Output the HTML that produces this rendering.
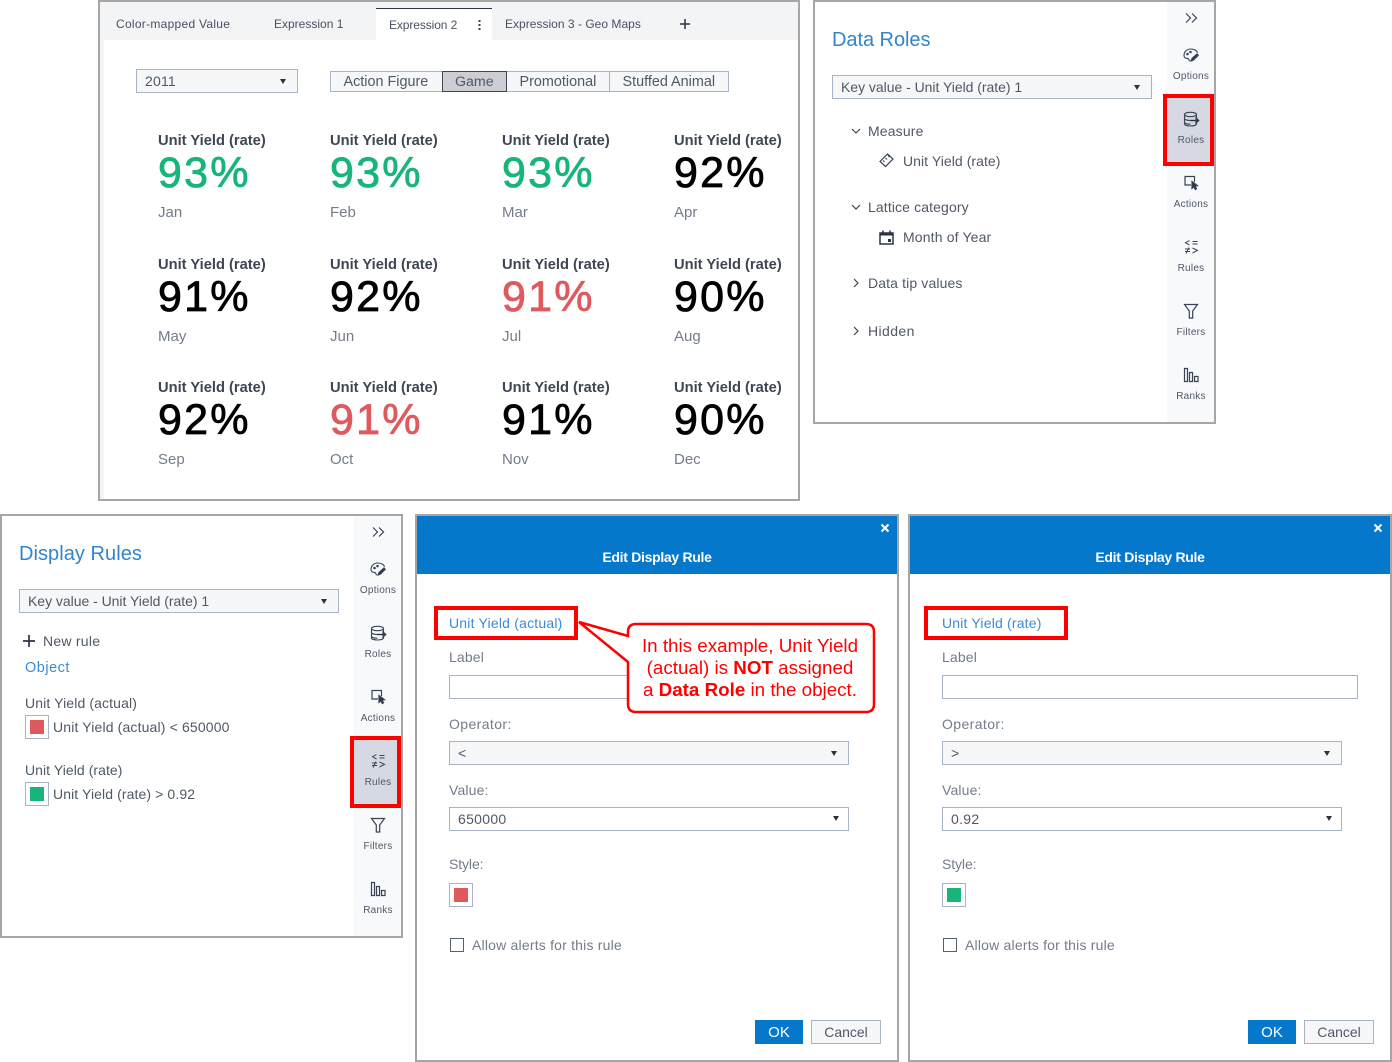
<!DOCTYPE html>
<html><head><meta charset="utf-8"><title>Display Rules</title>
<style>
html,body{margin:0;padding:0;background:#fff}
body{position:relative;width:1392px;height:1062px;overflow:hidden;font-family:"Liberation Sans",sans-serif;font-size:14px;color:#505866}
.b,.t,svg.i{position:absolute;box-sizing:border-box}
.t{white-space:nowrap;line-height:20px;height:20px}
.p{border:2px solid #a6a6a6;background:#fff}
.sel{border:1px solid #a9b3c6;background:#f5f7f9}
.w{background:#fff}
.tab{font-size:12px;color:#4a5060}
.kh{font-size:14.7px;font-weight:bold;color:#3f4653}
.kn{font-size:43px;line-height:50px;height:50px;letter-spacing:2.2px;color:#000;-webkit-text-stroke:.8px currentColor}
.kl{font-size:15px;color:#747c8a}
.g{color:#17b57a}.r{color:#de5a5e}
.sl{font-size:10px;color:#4f5767;text-align:center;width:47px;letter-spacing:.25px;line-height:14px;height:14px}
.blue{color:#3a8cd6}
.lbl{color:#747c89}
.h1{font-size:20px;color:#3085cd;line-height:26px;height:26px}
.hl{border:4px solid #f00;background:#d6d9e1}
.tri{position:absolute;width:0;height:0;border-left:3.5px solid transparent;border-right:3.5px solid transparent;border-top:5px solid #2b3240}
.hd{background:#0578cc}
.ht{color:#fff;font-weight:bold;font-size:14px;text-align:center;letter-spacing:-.3px}
.rb{border:4px solid #f00;background:#fff}
svg.i{overflow:visible;fill:none;stroke:#3a4254;stroke-width:1.2}
</style></head><body>

<svg width="0" height="0" style="position:absolute">
<defs>
<symbol id="opt" viewBox="0 0 24 24" overflow="visible"><path d="M14.500 16.800c-1 .9-2.200 1.200-3.300 1.200-1 0-1.200-.7-1.400-1.400-.2-1-.9-1.300-2-1.300-1.400 0-2.800-.6-2.800-2.800C5 8.600 8 6 11.800 6c3.600 0 6.200 1.800 6.700 3.700" fill="none" stroke="#3a4254" stroke-width="1.100"/><circle cx="8.500" cy="11" r=".7" fill="#3a4254"/><circle cx="11.500" cy="9" r=".7" fill="#3a4254"/><path d="M13 15.500l5-4.500 1.200 1.300-4.700 4.700-2.200.6z" fill="#2b3240"/></symbol>
<symbol id="db" viewBox="0 0 24 24" overflow="visible"><ellipse cx="11.500" cy="7.500" rx="6" ry="2.200" fill="none" stroke="#3a4254" stroke-width="1.100"/><path d="M5.500 7.500v9.500c0 1.200 2.700 2 6 2s5.500-.8 6-2v-1.500M17.500 7.500v3.500M5.500 11.500c0 1.200 2.700 2 6 2M5.500 15.200c0 1.200 2.700 2 6 2" fill="none" stroke="#3a4254" stroke-width="1.100"/><path d="M11 13.500h6.500" stroke="#2b3240" stroke-width="1.400" fill="none"/><path d="M17 11l2.800 2.500-2.800 2.500z" fill="#2b3240"/></symbol>
<symbol id="act" viewBox="0 0 24 24" overflow="visible"><path d="M12 14H6V5.500H15.500v5.500" fill="none" stroke="#3a4254" stroke-width="1.200"/><path d="M13 10.500l5.500 4.200-2.400.5 1.400 2.600-1.200.7-1.400-2.600-1.900 1.500z" fill="#2b3240"/></symbol>
<symbol id="rul" viewBox="0 0 24 24" overflow="visible"><path d="M10.500 5.500L6.500 7.800l4 2.200M13.500 6.500h5M13.500 9h5M6 14h5M6 16.500h5M10 12.500l-3 6M13.500 13l5 2.400-5 2.600" fill="none" stroke="#3a4254" stroke-width="1"/></symbol>
<symbol id="fil" viewBox="0 0 24 24" overflow="visible"><path d="M5.500 5.500h13l-4.800 6.500v7h-3.400v-7z" fill="none" stroke="#3a4254" stroke-width="1.200"/></symbol>
<symbol id="rnk" viewBox="0 0 24 24" overflow="visible"><path d="M5.500 5.500h3v13h-3zM10.500 9.500h3v9h-3zM15.500 13.500h3.500v5h-3.500z" fill="none" stroke="#3a4254" stroke-width="1.200"/></symbol>
<symbol id="dbl" viewBox="0 0 24 24" overflow="visible"><path d="M7 7.500l4.500 4.500-4.500 4.500M13 7.500l4.500 4.500-4.500 4.500" fill="none" stroke="#3a4254" stroke-width="1.200"/></symbol>
</defs>
</svg>

<!-- PANEL 1 -->
<div class="b p" style="left:98px;top:0;width:702px;height:501px"></div>
<div class="b" style="left:100px;top:2px;width:698px;height:38px;background:#f2f4f6"></div>
<div class="b" style="left:100px;top:40px;width:4px;height:459px;background:#f2f4f6"></div>
<div class="b w" style="left:376px;top:8px;width:116px;height:32px;border-top:1px solid #2b3240"></div>
<div class="t tab" style="left:116px;top:14px;letter-spacing:.28px">Color-mapped Value</div>
<div class="t tab" style="left:274px;top:14px">Expression 1</div>
<div class="t tab" style="left:389px;top:15px;letter-spacing:-.1px">Expression 2</div>
<svg class="i" style="left:476px;top:18px;stroke:none;fill:#3a4254" width="8" height="14"><rect x="2.500" y="2" width="2" height="2"/><rect x="2.500" y="6" width="2" height="2"/><rect x="2.500" y="10" width="2" height="2"/></svg>
<div class="t tab" style="left:505px;top:14px;letter-spacing:.02px">Expression 3 - Geo Maps</div>
<svg class="i" style="left:679px;top:18px;stroke:#2b3240;stroke-width:1.500" width="12" height="12"><path d="M6 1v10M1 6h10"/></svg>

<div class="b sel" style="left:136px;top:69px;width:162px;height:24px"></div>
<div class="t" style="left:145px;top:71px;letter-spacing:.2px">2011</div>
<div class="tri" style="left:280px;top:79px"></div>

<div class="b sel" style="left:330px;top:71px;width:113px;height:21px"></div>
<div class="b" style="left:442px;top:71px;width:65px;height:21px;background:#cdced3;border:1px solid #3d4756"></div>
<div class="b sel" style="left:507px;top:71px;width:103px;height:21px;border-left:0"></div>
<div class="b sel" style="left:609px;top:71px;width:120px;height:21px"></div>
<div class="t" style="left:343.500px;top:72px;font-size:14.400px">Action Figure</div>
<div class="t" style="left:455px;top:72px;font-size:14.200px">Game</div>
<div class="t" style="left:519.500px;top:72px;font-size:14.400px">Promotional</div>
<div class="t" style="left:622.500px;top:72px;font-size:14.400px">Stuffed Animal</div>

<div class="t kh" style="left:158px;top:131px">Unit Yield (rate)</div><div class="t kn g" style="left:158px;top:148px">93%</div><div class="t kl" style="left:158px;top:203px">Jan</div>
<div class="t kh" style="left:330px;top:131px">Unit Yield (rate)</div><div class="t kn g" style="left:330px;top:148px">93%</div><div class="t kl" style="left:330px;top:203px">Feb</div>
<div class="t kh" style="left:502px;top:131px">Unit Yield (rate)</div><div class="t kn g" style="left:502px;top:148px">93%</div><div class="t kl" style="left:502px;top:203px">Mar</div>
<div class="t kh" style="left:674px;top:131px">Unit Yield (rate)</div><div class="t kn" style="left:674px;top:148px">92%</div><div class="t kl" style="left:674px;top:203px">Apr</div>

<div class="t kh" style="left:158px;top:255px">Unit Yield (rate)</div><div class="t kn" style="left:158px;top:272px">91%</div><div class="t kl" style="left:158px;top:327px">May</div>
<div class="t kh" style="left:330px;top:255px">Unit Yield (rate)</div><div class="t kn" style="left:330px;top:272px">92%</div><div class="t kl" style="left:330px;top:327px">Jun</div>
<div class="t kh" style="left:502px;top:255px">Unit Yield (rate)</div><div class="t kn r" style="left:502px;top:272px">91%</div><div class="t kl" style="left:502px;top:327px">Jul</div>
<div class="t kh" style="left:674px;top:255px">Unit Yield (rate)</div><div class="t kn" style="left:674px;top:272px">90%</div><div class="t kl" style="left:674px;top:327px">Aug</div>

<div class="t kh" style="left:158px;top:378px">Unit Yield (rate)</div><div class="t kn" style="left:158px;top:395px">92%</div><div class="t kl" style="left:158px;top:450px">Sep</div>
<div class="t kh" style="left:330px;top:378px">Unit Yield (rate)</div><div class="t kn r" style="left:330px;top:395px">91%</div><div class="t kl" style="left:330px;top:450px">Oct</div>
<div class="t kh" style="left:502px;top:378px">Unit Yield (rate)</div><div class="t kn" style="left:502px;top:395px">91%</div><div class="t kl" style="left:502px;top:450px">Nov</div>
<div class="t kh" style="left:674px;top:378px">Unit Yield (rate)</div><div class="t kn" style="left:674px;top:395px">90%</div><div class="t kl" style="left:674px;top:450px">Dec</div>

<!-- PANEL 2 -->
<div class="b p" style="left:813px;top:0;width:403px;height:424px"></div>
<div class="b" style="left:1167px;top:2px;width:47px;height:420px;background:#f7f9fb"></div>
<div class="t h1" style="left:832px;top:27px;letter-spacing:-.05px">Data Roles</div>
<div class="b sel" style="left:832px;top:75px;width:320px;height:24px"></div>
<div class="t" style="left:841px;top:77px;letter-spacing:-.03px">Key value - Unit Yield (rate) 1</div>
<div class="tri" style="left:1134px;top:85px"></div>
<svg class="i" style="left:851px;top:126px" width="10" height="10"><path d="M1 3l4 4 4-4"/></svg>
<div class="t" style="left:868px;top:121px;letter-spacing:.15px">Measure</div>
<svg class="i" style="left:878px;top:152px" width="17" height="17"><path d="M2 9.500L9.500 2l5.500 5-7.500 7.500zM5 8.500l1.500 1.500M7.500 6l1.500 1.500M10 3.500l1.500 1.500"/></svg>
<div class="t" style="left:903px;top:151px;letter-spacing:.06px">Unit Yield (rate)</div>
<svg class="i" style="left:851px;top:202px" width="10" height="10"><path d="M1 3l4 4 4-4"/></svg>
<div class="t" style="left:868px;top:197px;letter-spacing:.12px">Lattice category</div>
<svg class="i" style="left:879px;top:230px;stroke-width:1.500;stroke:#2b3240" width="15" height="15"><path d="M1 3h13v11H1zM4 .5v3M11 .5v3"/><path d="M1 4h13" stroke-width="3"/><rect x="9" y="9" width="3" height="3" fill="#2b3240" stroke="none"/></svg>
<div class="t" style="left:903px;top:227px;letter-spacing:.15px">Month of Year</div>
<svg class="i" style="left:851px;top:278px" width="10" height="10"><path d="M3 1l4 4-4 4"/></svg>
<div class="t" style="left:868px;top:273px;letter-spacing:.13px">Data tip values</div>
<svg class="i" style="left:851px;top:326px" width="10" height="10"><path d="M3 1l4 4-4 4"/></svg>
<div class="t" style="left:868px;top:321px;letter-spacing:.4px">Hidden</div>

<div class="b hl" style="left:1163px;top:94px;width:51px;height:72px"></div>
<svg class="i" style="left:1179px;top:6px" width="24" height="24"><use href="#dbl"/></svg>
<svg class="i" style="left:1179px;top:43px" width="24" height="24"><use href="#opt"/></svg>
<div class="t sl" style="left:1167.500px;top:70px">Options</div>
<svg class="i" style="left:1179px;top:107px" width="24" height="24"><use href="#db"/></svg>
<div class="t sl" style="left:1167.500px;top:134px">Roles</div>
<svg class="i" style="left:1179px;top:171px" width="24" height="24"><use href="#act"/></svg>
<div class="t sl" style="left:1167.500px;top:198px">Actions</div>
<svg class="i" style="left:1179px;top:235px" width="24" height="24"><use href="#rul"/></svg>
<div class="t sl" style="left:1167.500px;top:262px">Rules</div>
<svg class="i" style="left:1179px;top:299px" width="24" height="24"><use href="#fil"/></svg>
<div class="t sl" style="left:1167.500px;top:326px">Filters</div>
<svg class="i" style="left:1179px;top:363px" width="24" height="24"><use href="#rnk"/></svg>
<div class="t sl" style="left:1167.500px;top:390px">Ranks</div>

<!-- PANEL 3 -->
<div class="b p" style="left:0;top:514px;width:403px;height:424px"></div>
<div class="b" style="left:354px;top:516px;width:47px;height:420px;background:#f7f9fb"></div>
<div class="t h1" style="left:19px;top:541px;letter-spacing:.05px">Display Rules</div>
<div class="b sel" style="left:19px;top:589px;width:320px;height:24px"></div>
<div class="t" style="left:28px;top:591px;letter-spacing:-.03px">Key value - Unit Yield (rate) 1</div>
<div class="tri" style="left:321px;top:599px"></div>
<svg class="i" style="left:23px;top:635px;stroke:#2b3240;stroke-width:1.700" width="12" height="12"><path d="M6 0v12M0 6h12"/></svg>
<div class="t" style="left:43px;top:631px;letter-spacing:.25px">New rule</div>
<div class="t blue" style="left:25px;top:658px;font-size:14.500px;letter-spacing:.5px">Object</div>
<div class="t" style="left:25px;top:693px;letter-spacing:.12px">Unit Yield (actual)</div>
<div class="b" style="left:25px;top:715px;width:24px;height:24px;border:1px solid #a9b3c6"></div>
<div class="b" style="left:30px;top:720px;width:14px;height:14px;background:#de5a5e"></div>
<div class="t" style="left:53px;top:717px;letter-spacing:.15px">Unit Yield (actual) &lt; 650000</div>
<div class="t" style="left:25px;top:760px;letter-spacing:.06px">Unit Yield (rate)</div>
<div class="b" style="left:25px;top:782px;width:24px;height:24px;border:1px solid #a9b3c6"></div>
<div class="b" style="left:30px;top:787px;width:14px;height:14px;background:#17b57a"></div>
<div class="t" style="left:53px;top:784px;letter-spacing:.1px">Unit Yield (rate) &gt; 0.92</div>

<div class="b hl" style="left:350px;top:736px;width:51px;height:72px"></div>
<svg class="i" style="left:366px;top:520px" width="24" height="24"><use href="#dbl"/></svg>
<svg class="i" style="left:366px;top:557px" width="24" height="24"><use href="#opt"/></svg>
<div class="t sl" style="left:354.500px;top:584px">Options</div>
<svg class="i" style="left:366px;top:621px" width="24" height="24"><use href="#db"/></svg>
<div class="t sl" style="left:354.500px;top:648px">Roles</div>
<svg class="i" style="left:366px;top:685px" width="24" height="24"><use href="#act"/></svg>
<div class="t sl" style="left:354.500px;top:712px">Actions</div>
<svg class="i" style="left:366px;top:749px" width="24" height="24"><use href="#rul"/></svg>
<div class="t sl" style="left:354.500px;top:776px">Rules</div>
<svg class="i" style="left:366px;top:813px" width="24" height="24"><use href="#fil"/></svg>
<div class="t sl" style="left:354.500px;top:840px">Filters</div>
<svg class="i" style="left:366px;top:877px" width="24" height="24"><use href="#rnk"/></svg>
<div class="t sl" style="left:354.500px;top:904px">Ranks</div>

<!-- PANEL 4 -->
<div class="b p" style="left:415px;top:514px;width:484px;height:548px"></div>
<div class="b hd" style="left:417px;top:516px;width:480px;height:58px"></div>
<svg class="i" style="left:880px;top:523px;stroke:#fff;stroke-width:2" width="10" height="10"><path d="M1.500 1.500l7 7M8.500 1.500l-7 7"/></svg>
<div class="t ht" style="left:417px;top:547px;width:480px">Edit Display Rule</div>
<div class="b rb" style="left:434px;top:606px;width:144px;height:34px"></div>
<div class="t blue" style="left:449px;top:613px;letter-spacing:.2px">Unit Yield (actual)</div>
<div class="t lbl" style="left:449px;top:647px;letter-spacing:.15px">Label</div>
<div class="b w" style="left:449px;top:675px;width:416px;height:24px;border:1px solid #a9b3c6"></div>
<div class="t lbl" style="left:449px;top:714px;letter-spacing:.4px">Operator:</div>
<div class="b sel" style="left:449px;top:741px;width:400px;height:24px"></div>
<div class="t" style="left:458px;top:743px">&lt;</div>
<div class="tri" style="left:831px;top:751px"></div>
<div class="t lbl" style="left:449px;top:780px;letter-spacing:.15px">Value:</div>
<div class="b w" style="left:449px;top:807px;width:400px;height:24px;border:1px solid #a9b3c6"></div>
<div class="t" style="left:458px;top:809px;letter-spacing:.3px">650000</div>
<div class="tri" style="left:833px;top:816px"></div>
<div class="t lbl" style="left:449px;top:854px;letter-spacing:-.1px">Style:</div>
<div class="b" style="left:449px;top:883px;width:24px;height:24px;border:1px solid #a9b3c6"></div>
<div class="b" style="left:454px;top:888px;width:14px;height:14px;background:#de5a5e"></div>
<div class="b" style="left:450px;top:938px;width:14px;height:14px;border:1px solid #56606f"></div>
<div class="t lbl" style="left:472px;top:935px;letter-spacing:.2px">Allow alerts for this rule</div>
<div class="b hd" style="left:755px;top:1020px;width:48px;height:24px"></div>
<div class="t" style="left:755px;top:1023px;width:48px;text-align:center;color:#fff;font-size:15px">OK</div>
<div class="b sel" style="left:811px;top:1020px;width:70px;height:24px"></div>
<div class="t" style="left:811px;top:1022px;width:70px;text-align:center">Cancel</div>

<svg class="i" style="left:0;top:0;stroke:#f00;stroke-width:2.500;fill:#fff" width="1392" height="1062"><path d="M636 624H866Q874 624 874 632V704Q874 712 866 712H636Q628 712 628 704V662L579 622L628 636V632Q628 624 636 624Z"/></svg>
<div class="t" style="left:628px;top:635px;width:244px;text-align:center;color:#f00;font-size:18.800px;line-height:22px;height:66px;white-space:normal">In this example, Unit Yield<br>(actual) is <b>NOT</b> assigned<br>a <b>Data Role</b> in the object.</div>

<!-- PANEL 5 -->
<div class="b p" style="left:908px;top:514px;width:484px;height:548px"></div>
<div class="b hd" style="left:910px;top:516px;width:480px;height:58px"></div>
<svg class="i" style="left:1373px;top:523px;stroke:#fff;stroke-width:2" width="10" height="10"><path d="M1.500 1.500l7 7M8.500 1.500l-7 7"/></svg>
<div class="t ht" style="left:910px;top:547px;width:480px">Edit Display Rule</div>
<div class="b rb" style="left:924px;top:606px;width:144px;height:34px"></div>
<div class="t blue" style="left:942px;top:613px;letter-spacing:.18px">Unit Yield (rate)</div>
<div class="t lbl" style="left:942px;top:647px;letter-spacing:.15px">Label</div>
<div class="b w" style="left:942px;top:675px;width:416px;height:24px;border:1px solid #a9b3c6"></div>
<div class="t lbl" style="left:942px;top:714px;letter-spacing:.4px">Operator:</div>
<div class="b sel" style="left:942px;top:741px;width:400px;height:24px"></div>
<div class="t" style="left:951px;top:743px">&gt;</div>
<div class="tri" style="left:1324px;top:751px"></div>
<div class="t lbl" style="left:942px;top:780px;letter-spacing:.15px">Value:</div>
<div class="b w" style="left:942px;top:807px;width:400px;height:24px;border:1px solid #a9b3c6"></div>
<div class="t" style="left:951px;top:809px;letter-spacing:.3px">0.92</div>
<div class="tri" style="left:1326px;top:816px"></div>
<div class="t lbl" style="left:942px;top:854px;letter-spacing:-.1px">Style:</div>
<div class="b" style="left:942px;top:883px;width:24px;height:24px;border:1px solid #a9b3c6"></div>
<div class="b" style="left:947px;top:888px;width:14px;height:14px;background:#17b57a"></div>
<div class="b" style="left:943px;top:938px;width:14px;height:14px;border:1px solid #56606f"></div>
<div class="t lbl" style="left:965px;top:935px;letter-spacing:.2px">Allow alerts for this rule</div>
<div class="b hd" style="left:1248px;top:1020px;width:48px;height:24px"></div>
<div class="t" style="left:1248px;top:1023px;width:48px;text-align:center;color:#fff;font-size:15px">OK</div>
<div class="b sel" style="left:1304px;top:1020px;width:70px;height:24px"></div>
<div class="t" style="left:1304px;top:1022px;width:70px;text-align:center">Cancel</div>

</body></html>
